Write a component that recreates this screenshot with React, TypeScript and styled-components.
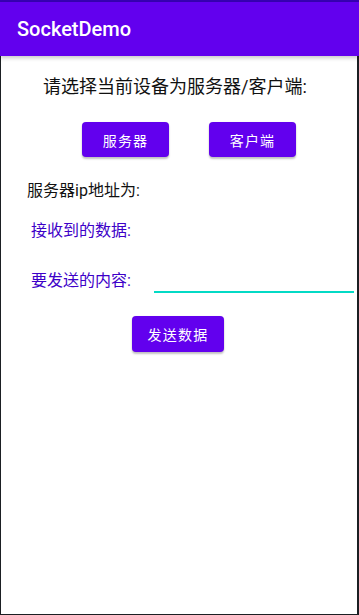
import React, { useState } from 'react';
import styled, { createGlobalStyle } from 'styled-components';

const GlobalStyle = createGlobalStyle`
	html, body {
		margin: 0;
		padding: 0;
		background: #ffffff;
	}
	body {
		font-family: Roboto, "Noto Sans CJK SC", sans-serif;
	}
`;

const Screen = styled.div`
	width: 359px;
	height: 615px;
	display: flex;
	flex-direction: column;
	box-sizing: border-box;
	overflow: hidden;
`;

const StatusBar = styled.div`
	height: 2px;
	background: #3700b3;
`;

const AppBar = styled.div`
	height: 54px;
	background: #6200ee;
	display: flex;
	align-items: center;
	padding-left: 17px;
	color: #ffffff;
	font-size: 20px;
	font-weight: 500;
	position: relative;
	z-index: 1;
	box-shadow: 0 2px 4px rgba(0, 0, 0, 0.22);
`;

const Content = styled.div`
	flex: 1;
	display: flex;
	flex-direction: column;
	border-left: 1px solid #1b1f23;
	border-right: 2px solid #1b1f23;
	border-bottom: 1px solid #1b1f23;
`;

const Heading = styled.div`
	margin-top: 19px;
	padding-left: 42px;
	font-size: 18px;
	line-height: 24px;
	color: #111111;
`;

const ButtonRow = styled.div`
	display: flex;
	gap: 40px;
	padding-left: 81px;
	margin-top: 23px;
`;

const Button = styled.button<{ $w: number; $h?: number }>`
	width: ${(p) => p.$w}px;
	height: ${(p) => p.$h || 35}px;
	border: none;
	border-radius: 4px;
	background: #6200ee;
	color: #ffffff;
	font-family: Roboto, "Noto Sans CJK SC", sans-serif;
	font-size: 14px;
	letter-spacing: 1.2px;
	padding: 0;
	box-shadow: 0 2px 2px rgba(0, 0, 0, 0.24), 0 0 1px rgba(0, 0, 0, 0.12);
	cursor: pointer;
`;

const Label = styled.div<{ $color?: string; $left: number; $top: number }>`
	margin-top: ${(p) => p.$top}px;
	padding-left: ${(p) => p.$left}px;
	font-size: 16px;
	line-height: 22px;
	color: ${(p) => p.$color || '#111111'};
`;

const SendRow = styled.div`
	display: flex;
	align-items: flex-end;
	margin-top: 23px;
	padding-left: 30px;
`;

const SendLabel = styled.div`
	font-size: 16px;
	line-height: 22px;
	color: #3d00c8;
	width: 123px;
`;

const Input = styled.input`
	width: 200px;
	height: 26px;
	border: none;
	border-bottom: 2px solid #03dac5;
	outline: none;
	background: transparent;
	font-size: 16px;
	padding: 0;
	margin-bottom: -1px;
`;

const SendWrap = styled.div`
	display: flex;
	justify-content: center;
	margin-top: 24px;
	padding-right: 2px;
`;

const App: React.FC = () => {
	const [text, setText] = useState<string>('');

	return (
		<>
			<GlobalStyle />
			<Screen>
				<StatusBar />
				<AppBar>SocketDemo</AppBar>
				<Content>
					<Heading>请选择当前设备为服务器/客户端:</Heading>
					<ButtonRow>
						<Button $w={87}>服务器</Button>
						<Button $w={87}>客户端</Button>
					</ButtonRow>
					<Label $left={26} $top={23}>服务器ip地址为:</Label>
					<Label $left={30} $top={18} $color="#3d00c8">接收到的数据:</Label>
					<SendRow>
						<SendLabel>要发送的内容:</SendLabel>
						<Input value={text} onChange={(e) => setText(e.target.value)} />
					</SendRow>
					<SendWrap>
						<Button $w={92} $h={36}>发送数据</Button>
					</SendWrap>
				</Content>
			</Screen>
		</>
	);
};

export default App;
